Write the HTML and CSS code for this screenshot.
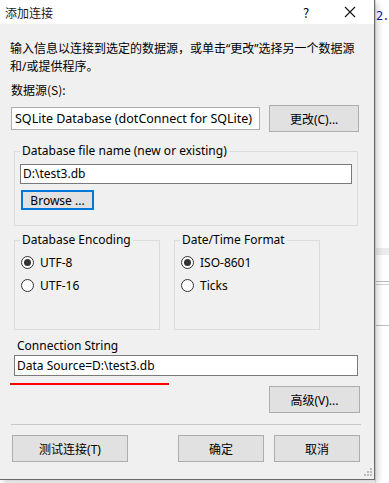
FILE: index.html
```html
<!DOCTYPE html>
<html lang="zh-CN">
<head>
    <meta charset="UTF-8">
    <title>添加连接</title>
    <link rel="stylesheet" href="styles.css">
</head>
<body>
    <div class="screen">
        <div class="dialog">
            <div class="titlebar">
                <span class="title">添加连接</span>
                <span class="help">?</span>
                <span class="close">
                    <svg width="12" height="12" viewBox="0 0 12 12"><path d="M1 1L11 11M11 1L1 11" stroke="#111" stroke-width="1.1" fill="none"/></svg>
                </span>
            </div>

            <div class="content">
                <p class="intro">输入信息以连接到选定的数据源，或单击“更改”选择另一个数据源和/或提供程序。</p>
                <p class="label">数据源(S):</p>
                <div class="source-row">
                    <div class="source-box">SQLite Database (dotConnect for SQLite)</div>
                    <button class="btn btn-change">更改(C)...</button>
                </div>

                <fieldset class="group group-file">
                    <legend>Database file name (new or existing)</legend>
                    <div class="textbox file-box">D:\test3.db</div>
                    <button class="btn btn-browse">Browse ...</button>
                </fieldset>

                <div class="options">
                    <fieldset class="group group-small">
                        <legend>Database Encoding</legend>
                        <div class="radio"><span class="dot checked"></span>UTF-8</div>
                        <div class="radio"><span class="dot"></span>UTF-16</div>
                    </fieldset>
                    <fieldset class="group group-small">
                        <legend>Date/Time Format</legend>
                        <div class="radio"><span class="dot checked"></span>ISO-8601</div>
                        <div class="radio"><span class="dot"></span>Ticks</div>
                    </fieldset>
                </div>

                <p class="conn-label">Connection String</p>
                <div class="textbox conn-box">Data Source=D:\test3.db</div>
                <div class="red-mark"></div>

                <div class="advanced-row">
                    <button class="btn btn-advanced">高级(V)...</button>
                </div>

                <div class="separator"></div>

                <div class="footer">
                    <button class="btn btn-test">测试连接(T)</button>
                    <div class="footer-right">
                        <button class="btn btn-ok">确定</button>
                        <button class="btn btn-cancel">取消</button>
                    </div>
                </div>
                <div class="grip">
                    <svg width="9" height="9" viewBox="0 0 9 9" fill="#bdbdbd">
                        <rect x="7" y="1" width="2" height="2"/>
                        <rect x="4" y="4" width="2" height="2"/><rect x="7" y="4" width="2" height="2"/>
                        <rect x="1" y="7" width="2" height="2"/><rect x="4" y="7" width="2" height="2"/><rect x="7" y="7" width="2" height="2"/>
                    </svg>
                </div>
            </div>
        </div>

        <div class="desktop">
            <div class="code">2.</div>
            <div class="band"></div>
            <div class="rule rule-1"></div>
            <div class="rule rule-2"></div>
            <div class="rule rule-3"></div>
        </div>
    </div>
</body>
</html>
```

FILE: styles.css
```css
body {
    margin: 0;
    width: 389px;
    height: 483px;
    overflow: hidden;
    background: #fff;
    font-family: "Noto Sans", "Noto Sans CJK SC", sans-serif;
    font-size: 12px;
    color: #000;
}

.screen {
    display: flex;
    height: 483px;
}

/* dialog window */
.dialog {
    width: 375px;
    height: 480px;
    flex-shrink: 0;
    border-right: 1px solid #6b6b6b;
    border-bottom: 1px solid #6b6b6b;
    box-sizing: border-box;
    background: #f0f0f0;
    box-shadow: 3px 3px 6px rgba(0, 0, 0, 0.18);
    position: relative;
    z-index: 1;
}

.titlebar {
    height: 24px;
    background: #fff;
    display: flex;
    align-items: center;
    font-family: "Noto Sans CJK SC", sans-serif;
}

.title {
    flex: 1;
    padding-left: 5px;
    font-size: 12px;
    color: #1a1a1a;
}

.help {
    width: 20px;
    margin-right: 24px;
    font-size: 13px;
    text-align: center;
}

.close {
    width: 20px;
    margin-right: 14px;
    display: flex;
    justify-content: center;
}

.content {
    padding: 0 15px 0 11px;
    position: relative;
    height: 454px;
    box-sizing: border-box;
}

p {
    margin: 0;
}

.intro {
    font-family: "Noto Sans", "Noto Sans CJK SC", sans-serif;
    padding-top: 16px;
    line-height: 18px;
    width: 356px;
    margin-left: -1px;
}

.label {
    font-family: "Noto Sans CJK SC", sans-serif;
    margin-top: 5px;
    line-height: 18px;
}

.source-row {
    display: flex;
    align-items: center;
    margin-top: 6px;
}

.source-box {
    width: 250px;
    height: 23px;
    box-sizing: border-box;
    background: #fff;
    border: 1px solid #adadad;
    line-height: 21px;
    padding-left: 3px;
    font-size: 12.5px;
    white-space: nowrap;
    overflow: hidden;
}

.btn {
    font-family: "Noto Sans", "Noto Sans CJK SC", sans-serif;
    font-size: 12px;
    background: #e1e1e1;
    border: 1px solid #adadad;
    color: #000;
    padding: 0;
    box-sizing: border-box;
}

.btn-change {
    width: 90px;
    height: 27px;
    margin-left: 9px;
}

/* group boxes */
.group {
    border: 1px solid #dcdcdc;
    margin: 0;
    box-sizing: border-box;
    padding: 0;
}

.group legend {
    padding: 0 2px;
    margin-left: 0;
    line-height: 14px;
}

.group-file {
    width: 344px;
    height: 82px;
    margin-top: 12px;
    margin-left: 3px;
    padding: 6px 5px 0 5px;
}

.textbox {
    background: #fff;
    border: 1px solid #7a7a7a;
    box-sizing: border-box;
    height: 20px;
    line-height: 18px;
    padding-left: 2px;
}

.file-box {
    width: 332px;
}

.btn-browse {
    width: 73px;
    height: 20px;
    margin-top: 6px;
    margin-left: 1px;
    border: 2px solid #0078d7;
}

.options {
    display: flex;
    gap: 14px;
    margin-top: 7px;
    margin-left: 3px;
}

.group-small {
    width: 146px;
    height: 97px;
    padding: 8px 0 0 6px;
}

.group-small legend {
    margin-left: -1px;
}

.radio {
    display: flex;
    align-items: center;
    height: 14px;
    margin-bottom: 9px;
}

.dot {
    width: 13px;
    height: 13px;
    border: 1px solid #333;
    border-radius: 50%;
    box-sizing: border-box;
    background: #fff;
    margin-right: 6px;
    display: flex;
    align-items: center;
    justify-content: center;
}

.dot.checked::after {
    content: "";
    width: 7px;
    height: 7px;
    border-radius: 50%;
    background: #333;
}

.conn-label {
    margin-top: 7px;
    margin-left: 6px;
    line-height: 18px;
}

.conn-box {
    width: 344px;
    height: 21px;
    margin-left: 3px;
    line-height: 19px;
}

.red-mark {
    width: 159px;
    height: 2px;
    background: #f00;
    margin-top: 7px;
    margin-left: -1px;
}

.advanced-row {
    display: flex;
    justify-content: flex-end;
    margin-top: 1px;
}

.btn-advanced {
    width: 91px;
    height: 27px;
    margin-right: -1px;
}

.separator {
    height: 0;
    border-top: 1px solid #c8c8c8;
    margin-top: 11px;
    width: 350px;
}

.footer {
    display: flex;
    justify-content: space-between;
    margin-top: 10px;
    margin-left: 1px;
}

.btn-test {
    width: 116px;
    height: 27px;
}

.footer-right {
    display: flex;
    gap: 10px;
    margin-right: -1px;
}

.btn-ok,
.btn-cancel {
    width: 86px;
    height: 27px;
}

.grip {
    position: absolute;
    right: 2px;
    bottom: 2px;
    line-height: 0;
}

/* background window to the right */
.desktop {
    flex: 1;
    position: relative;
    background: #fff;
    border-left: 1px solid #e0e0e0;
}

.code {
    font-family: "DejaVu Sans Mono", monospace;
    font-size: 12px;
    color: #1a1aa6;
    padding: 9px 0 0 0;
    height: 24px;
    box-sizing: border-box;
    white-space: nowrap;
    letter-spacing: -1px;
}

.band {
    margin-top: 224px;
    height: 7px;
    background: #ebebeb;
}

.rule {
    height: 1px;
    background: #bdbdbd;
}

.rule-1 {
    margin-top: 26px;
}

.rule-2 {
    margin-top: 2px;
    background: #d0d0d0;
}

.rule-3 {
    margin-top: 40px;
}
```
